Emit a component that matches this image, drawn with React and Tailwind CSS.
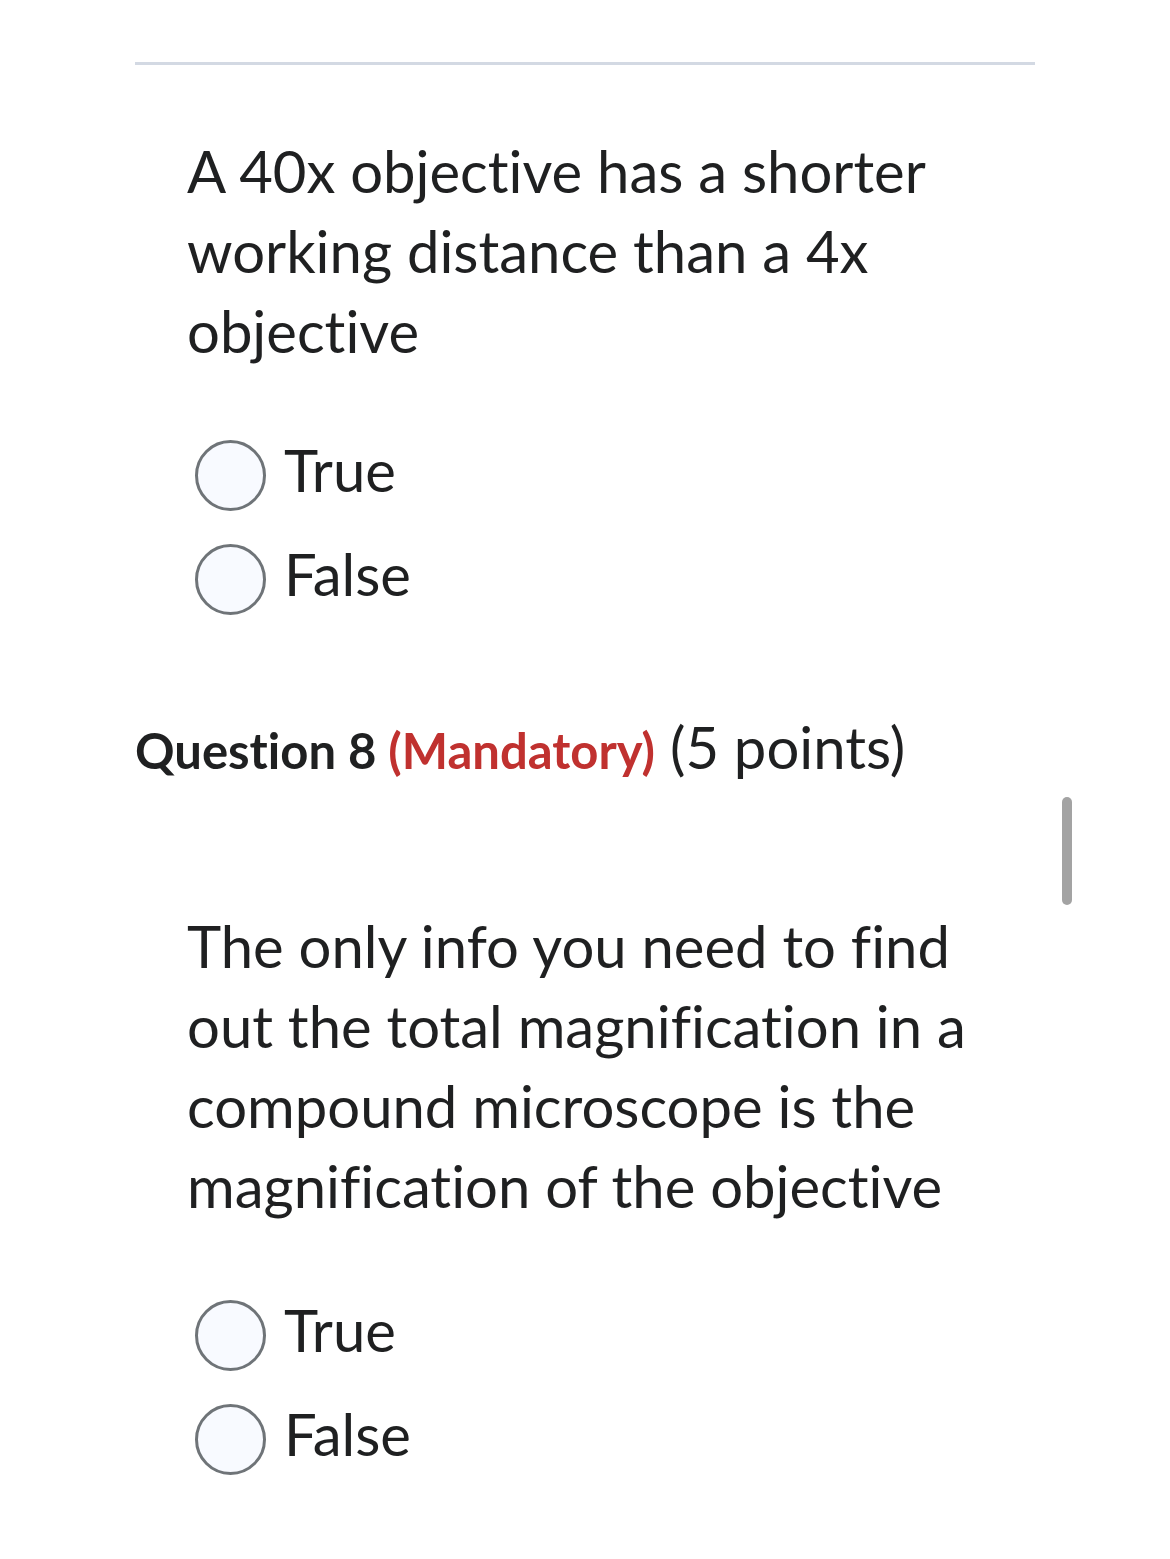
const FONT = "font-['Lato','Noto_Sans',sans-serif] [font-variant-ligatures:none]";

function Radio({ label }) {
  return (
    <label className="flex items-center gap-[18px]">
      <span className="ml-[8px] w-[71px] h-[71px] rounded-full border-[3px] border-[#6f7478] bg-[#f8faff] shrink-0" />
      <span className="text-[58px] leading-[70px] mb-[10px] text-[#1f2021]">{label}</span>
    </label>
  );
}

function Question({ text, gap }) {
  return (
    <div className="pl-[52px]">
      <p className="text-[58px] leading-[80px] text-[#1f2021] w-[820px]">{text}</p>
      <div className={`${gap} flex flex-col gap-[24px]`}>
        <Radio label="True" />
        <Radio label="False" />
      </div>
    </div>
  );
}

export default function App() {
  return (
    <div className={`${FONT} relative bg-white w-[1170px] h-[1559px] overflow-hidden`}>
      <div className="mx-[135px] pt-[62px]">
        <div className="h-[3px] bg-[#d3d9e3]" />
        <div className="pt-[66px]">
          <Question gap="mt-[64px]" text="A 40x objective has a shorter working distance than a 4x objective" />
        </div>
        <h2 className="mt-[88px] text-[58px] leading-[80px] text-[#1f2021]">
          <span className="font-bold text-[49px]">Question 8 </span>
          <span className="font-bold text-[49px] text-[#c0312f]">(Mandatory)</span>
          <span> (5 points)</span>
        </h2>
        <div className="pt-[116px]">
          <Question gap="mt-[69px]" text="The only info you need to find out the total magnification in a compound microscope is the magnification of the objective" />
        </div>
      </div>
      <div className="absolute left-[1062px] top-[797px] w-[10px] h-[108px] rounded-full bg-[#a3a3a3]" />
    </div>
  );
}
